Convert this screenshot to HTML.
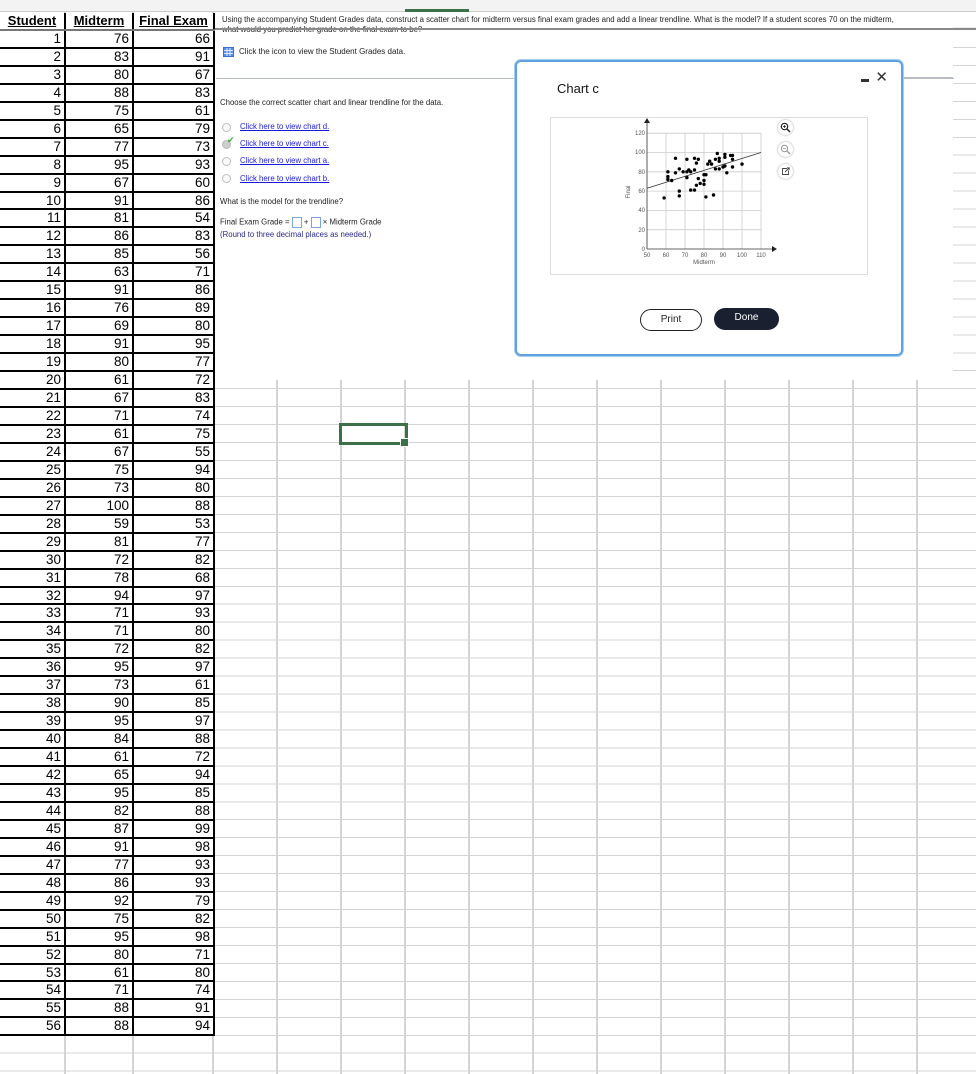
<!DOCTYPE html>
<html><head><meta charset="utf-8"><style>
*{margin:0;padding:0;box-sizing:border-box}
body{width:976px;height:1074px;overflow:hidden;background:#fff;position:relative;font-family:"Liberation Sans",Arial,sans-serif}
.grid{position:absolute;left:0;top:13px;width:976px;height:1061px;
background-image:repeating-linear-gradient(to bottom,transparent 0,transparent 16.96px,#d4d4d4 16.96px,#d4d4d4 17.96px);
background-position:0 17px}
.vl{position:absolute;top:0;width:2px;height:1074px;background:#d4d4d4}
.hdr{position:absolute;left:0;top:0;width:976px;height:12px;background:#f3f3f3;border-bottom:1px solid #ccc}
.tbl{position:absolute;left:0;top:13px;width:215px;background:#fff}
.r{display:flex;height:17.96px;border-bottom:2px solid #000;font-size:13.5px;line-height:16px;color:#000}
.r div{border-right:2px solid #000;text-align:right;padding-right:3px}
.c1{width:66px}.c2{width:68px}.c3{width:81px}
.h div{text-align:center;font-weight:bold;text-decoration:underline;padding:0;font-size:13px}
.panel{position:absolute;left:215px;top:12px;width:738px;height:368px;background:#fff;font-size:8px;color:#222}
.panel p{position:absolute;white-space:nowrap}
.lnk{color:#1a1adc;text-decoration:underline}
.rad{position:absolute;width:9px;height:9px;border:1px solid #bbb;border-radius:50%;background:#fafafa}
.dlg{position:absolute;left:515px;top:60px;width:388px;height:296px;border:2px solid #5ea3e0;border-radius:6px;background:#fff;box-shadow:0 0 0 1px #a9cdf0}
.btn{position:absolute;height:22px;border-radius:11px;font-size:10px;text-align:center;line-height:20px}
.ic{position:absolute;width:15px;height:15px;border-radius:50%;background:#fff;box-shadow:0 0 2px #999}
</style></head><body>
<div class="grid"></div>
<div class="vl" style="left:64px"></div><div class="vl" style="left:132px"></div><div class="vl" style="left:212px"></div>
<div class="vl" style="left:276px"></div><div class="vl" style="left:340px"></div><div class="vl" style="left:404px"></div>
<div class="vl" style="left:468px"></div><div class="vl" style="left:532px"></div><div class="vl" style="left:596px"></div>
<div class="vl" style="left:660px"></div><div class="vl" style="left:724px"></div><div class="vl" style="left:788px"></div>
<div class="vl" style="left:852px"></div><div class="vl" style="left:916px"></div>
<div class="hdr"></div>
<div style="position:absolute;left:405px;top:9px;width:64px;height:3px;background:#3b7049"></div>
<div class="tbl">
<div class="r h"><div class="c1">Student</div><div class="c2">Midterm</div><div class="c3">Final Exam</div></div>
<div class="r"><div class="c1">1</div><div class="c2">76</div><div class="c3">66</div></div>
<div class="r"><div class="c1">2</div><div class="c2">83</div><div class="c3">91</div></div>
<div class="r"><div class="c1">3</div><div class="c2">80</div><div class="c3">67</div></div>
<div class="r"><div class="c1">4</div><div class="c2">88</div><div class="c3">83</div></div>
<div class="r"><div class="c1">5</div><div class="c2">75</div><div class="c3">61</div></div>
<div class="r"><div class="c1">6</div><div class="c2">65</div><div class="c3">79</div></div>
<div class="r"><div class="c1">7</div><div class="c2">77</div><div class="c3">73</div></div>
<div class="r"><div class="c1">8</div><div class="c2">95</div><div class="c3">93</div></div>
<div class="r"><div class="c1">9</div><div class="c2">67</div><div class="c3">60</div></div>
<div class="r"><div class="c1">10</div><div class="c2">91</div><div class="c3">86</div></div>
<div class="r"><div class="c1">11</div><div class="c2">81</div><div class="c3">54</div></div>
<div class="r"><div class="c1">12</div><div class="c2">86</div><div class="c3">83</div></div>
<div class="r"><div class="c1">13</div><div class="c2">85</div><div class="c3">56</div></div>
<div class="r"><div class="c1">14</div><div class="c2">63</div><div class="c3">71</div></div>
<div class="r"><div class="c1">15</div><div class="c2">91</div><div class="c3">86</div></div>
<div class="r"><div class="c1">16</div><div class="c2">76</div><div class="c3">89</div></div>
<div class="r"><div class="c1">17</div><div class="c2">69</div><div class="c3">80</div></div>
<div class="r"><div class="c1">18</div><div class="c2">91</div><div class="c3">95</div></div>
<div class="r"><div class="c1">19</div><div class="c2">80</div><div class="c3">77</div></div>
<div class="r"><div class="c1">20</div><div class="c2">61</div><div class="c3">72</div></div>
<div class="r"><div class="c1">21</div><div class="c2">67</div><div class="c3">83</div></div>
<div class="r"><div class="c1">22</div><div class="c2">71</div><div class="c3">74</div></div>
<div class="r"><div class="c1">23</div><div class="c2">61</div><div class="c3">75</div></div>
<div class="r"><div class="c1">24</div><div class="c2">67</div><div class="c3">55</div></div>
<div class="r"><div class="c1">25</div><div class="c2">75</div><div class="c3">94</div></div>
<div class="r"><div class="c1">26</div><div class="c2">73</div><div class="c3">80</div></div>
<div class="r"><div class="c1">27</div><div class="c2">100</div><div class="c3">88</div></div>
<div class="r"><div class="c1">28</div><div class="c2">59</div><div class="c3">53</div></div>
<div class="r"><div class="c1">29</div><div class="c2">81</div><div class="c3">77</div></div>
<div class="r"><div class="c1">30</div><div class="c2">72</div><div class="c3">82</div></div>
<div class="r"><div class="c1">31</div><div class="c2">78</div><div class="c3">68</div></div>
<div class="r"><div class="c1">32</div><div class="c2">94</div><div class="c3">97</div></div>
<div class="r"><div class="c1">33</div><div class="c2">71</div><div class="c3">93</div></div>
<div class="r"><div class="c1">34</div><div class="c2">71</div><div class="c3">80</div></div>
<div class="r"><div class="c1">35</div><div class="c2">72</div><div class="c3">82</div></div>
<div class="r"><div class="c1">36</div><div class="c2">95</div><div class="c3">97</div></div>
<div class="r"><div class="c1">37</div><div class="c2">73</div><div class="c3">61</div></div>
<div class="r"><div class="c1">38</div><div class="c2">90</div><div class="c3">85</div></div>
<div class="r"><div class="c1">39</div><div class="c2">95</div><div class="c3">97</div></div>
<div class="r"><div class="c1">40</div><div class="c2">84</div><div class="c3">88</div></div>
<div class="r"><div class="c1">41</div><div class="c2">61</div><div class="c3">72</div></div>
<div class="r"><div class="c1">42</div><div class="c2">65</div><div class="c3">94</div></div>
<div class="r"><div class="c1">43</div><div class="c2">95</div><div class="c3">85</div></div>
<div class="r"><div class="c1">44</div><div class="c2">82</div><div class="c3">88</div></div>
<div class="r"><div class="c1">45</div><div class="c2">87</div><div class="c3">99</div></div>
<div class="r"><div class="c1">46</div><div class="c2">91</div><div class="c3">98</div></div>
<div class="r"><div class="c1">47</div><div class="c2">77</div><div class="c3">93</div></div>
<div class="r"><div class="c1">48</div><div class="c2">86</div><div class="c3">93</div></div>
<div class="r"><div class="c1">49</div><div class="c2">92</div><div class="c3">79</div></div>
<div class="r"><div class="c1">50</div><div class="c2">75</div><div class="c3">82</div></div>
<div class="r"><div class="c1">51</div><div class="c2">95</div><div class="c3">98</div></div>
<div class="r"><div class="c1">52</div><div class="c2">80</div><div class="c3">71</div></div>
<div class="r"><div class="c1">53</div><div class="c2">61</div><div class="c3">80</div></div>
<div class="r"><div class="c1">54</div><div class="c2">71</div><div class="c3">74</div></div>
<div class="r"><div class="c1">55</div><div class="c2">88</div><div class="c3">91</div></div>
<div class="r"><div class="c1">56</div><div class="c2">88</div><div class="c3">94</div></div>
</div>
<div style="position:absolute;left:0;top:29px;width:215px;height:2px;background:#777"></div>

<div class="panel">
<p style="left:7px;top:3px;font-size:7.8px">Using the accompanying Student Grades data, construct a scatter chart for midterm versus final exam grades and add a linear trendline. What is the model? If a student scores 70 on the midterm,</p>
<p style="left:7px;top:13px;font-size:7.8px">what would you predict her grade on the final exam to be?</p>
<div style="position:absolute;left:0;top:16px;width:761px;height:2px;background:#8a8a8a"></div>
<svg style="position:absolute;left:8px;top:35px" width="11" height="10"><rect x=".5" y=".5" width="10" height="9" fill="#5b8ee8" stroke="#3a6fd0"/><path d="M1 3.5H10M1 6.5H10M4 1V9M7 1V9" stroke="#fff" stroke-width=".8"/></svg>
<p style="left:24px;top:35px">Click the icon to view the Student Grades data.</p>
<div style="position:absolute;left:1px;top:66px;width:738px;height:1px;background:#b7bdc8"></div>
<p style="left:5px;top:86px;font-size:7.8px">Choose the correct scatter chart and linear trendline for the data.</p>
<div class="rad" style="left:7px;top:111px"></div><p class="lnk" style="left:25px;top:110px;font-size:7.8px">Click here to view chart d.</p>
<div class="rad" style="left:7px;top:128px;background:#ccc"></div><span style="position:absolute;left:12px;top:123px;color:#3a3;font-size:9px">✔</span><p class="lnk" style="left:25px;top:127px;font-size:7.8px">Click here to view chart c.</p>
<div class="rad" style="left:7px;top:145px"></div><p class="lnk" style="left:25px;top:144px;font-size:7.8px">Click here to view chart a.</p>
<div class="rad" style="left:7px;top:162px"></div><p class="lnk" style="left:25px;top:162px;font-size:7.8px">Click here to view chart b.</p>
<p style="left:5px;top:185px;font-size:7.8px">What is the model for the trendline?</p>
<p style="left:5px;top:205px;font-size:7.8px">Final Exam Grade = <span style="display:inline-block;width:10px;height:11px;border:1px solid #7aa7e0;vertical-align:middle"></span> + <span style="display:inline-block;width:10px;height:11px;border:1px solid #7aa7e0;vertical-align:middle"></span> × Midterm Grade</p>
<p style="left:5px;top:218px;font-size:7.8px;color:#2a2a8a">(Round to three decimal places as needed.)</p>
</div>

<div class="dlg">
<div style="position:absolute;left:40px;top:19px;font-size:13px;color:#111">Chart c</div>
<div style="position:absolute;width:8px;height:3px;background:#333;top:17px;right:32px"></div>
<div style="position:absolute;right:13px;top:6px;font-size:15px;color:#333">✕</div>
<div style="position:absolute;left:33px;top:55px;width:318px;height:158px;border:1px solid #ddd"></div>
<svg style="position:absolute;left:83px;top:55px" width="200" height="150" font-family="Liberation Sans,sans-serif" font-size="6" fill="#555">
<g stroke="#ccc" stroke-width=".8">
<path d="M66 16V132M85 16V132M104 16V132M123 16V132M142 16V132M161 16V132"/>
<path d="M47 16.2H161M47 35.5H161M47 54.8H161M47 74.1H161M47 93.4H161M47 112.7H161"/>
</g>
<path d="M47 132V6M47 132H172" stroke="#333" stroke-width=".8"/>
<path d="M44 6L47 1L50 6Z M172 129L177 132L172 135Z" fill="#222"/>
<path d="M47 71.2L161 35.5" stroke="#333" stroke-width=".8"/>
<g text-anchor="end"><text x="45" y="18">120</text><text x="45" y="37">100</text><text x="45" y="57">80</text><text x="45" y="76">60</text><text x="45" y="95">40</text><text x="45" y="115">20</text><text x="45" y="134">0</text></g>
<g text-anchor="middle"><text x="47" y="140">50</text><text x="66" y="140">60</text><text x="85" y="140">70</text><text x="104" y="140">80</text><text x="123" y="140">90</text><text x="142" y="140">100</text><text x="161" y="140">110</text><text x="104" y="147">Midterm</text></g>
<text transform="translate(30 75) rotate(-90)" text-anchor="middle">Final</text>
<g fill="#000">
<circle cx="96.4" cy="68.3" r="1.7"/><circle cx="109.7" cy="44.2" r="1.7"/><circle cx="104" cy="67.3" r="1.7"/><circle cx="119.2" cy="51.9" r="1.7"/><circle cx="94.5" cy="73.1" r="1.7"/><circle cx="75.5" cy="55.8" r="1.7"/><circle cx="98.3" cy="61.6" r="1.7"/><circle cx="132.5" cy="42.3" r="1.7"/><circle cx="79.3" cy="74.1" r="1.7"/><circle cx="124.9" cy="49" r="1.7"/><circle cx="105.9" cy="79.9" r="1.7"/><circle cx="115.4" cy="51.9" r="1.7"/><circle cx="113.5" cy="78" r="1.7"/><circle cx="71.7" cy="63.5" r="1.7"/><circle cx="96.4" cy="46.1" r="1.7"/><circle cx="83.1" cy="54.8" r="1.7"/><circle cx="124.9" cy="40.3" r="1.7"/><circle cx="104" cy="57.7" r="1.7"/><circle cx="67.9" cy="62.5" r="1.7"/><circle cx="79.3" cy="51.9" r="1.7"/><circle cx="86.9" cy="60.6" r="1.7"/><circle cx="67.9" cy="59.6" r="1.7"/><circle cx="79.3" cy="78.9" r="1.7"/><circle cx="94.5" cy="41.3" r="1.7"/><circle cx="90.7" cy="54.8" r="1.7"/><circle cx="142" cy="47.1" r="1.7"/><circle cx="64.1" cy="80.9" r="1.7"/><circle cx="105.9" cy="57.7" r="1.7"/><circle cx="88.8" cy="52.9" r="1.7"/><circle cx="100.2" cy="66.4" r="1.7"/><circle cx="130.6" cy="38.4" r="1.7"/><circle cx="86.9" cy="42.3" r="1.7"/><circle cx="86.9" cy="54.8" r="1.7"/><circle cx="132.5" cy="38.4" r="1.7"/><circle cx="90.7" cy="73.1" r="1.7"/><circle cx="123" cy="50" r="1.7"/><circle cx="111.6" cy="47.1" r="1.7"/><circle cx="75.5" cy="41.3" r="1.7"/><circle cx="132.5" cy="50" r="1.7"/><circle cx="107.8" cy="47.1" r="1.7"/><circle cx="117.3" cy="36.5" r="1.7"/><circle cx="124.9" cy="37.4" r="1.7"/><circle cx="98.3" cy="42.3" r="1.7"/><circle cx="115.4" cy="42.3" r="1.7"/><circle cx="126.8" cy="55.8" r="1.7"/><circle cx="94.5" cy="52.9" r="1.7"/><circle cx="104" cy="63.5" r="1.7"/><circle cx="67.9" cy="54.8" r="1.7"/><circle cx="119.2" cy="44.2" r="1.7"/><circle cx="119.2" cy="41.3" r="1.7"/>
</g>
</svg>
<div class="ic" style="left:261px;top:58px"><svg width="15" height="15"><circle cx="6.5" cy="6.5" r="3.2" fill="none" stroke="#222" stroke-width="1.2"/><path d="M9 9L12 12" stroke="#222" stroke-width="1.5"/><path d="M5 6.5H8M6.5 5V8" stroke="#222" stroke-width=".8"/></svg></div>
<div class="ic" style="left:261px;top:80px"><svg width="15" height="15"><circle cx="6.5" cy="6.5" r="3.2" fill="none" stroke="#999" stroke-width="1"/><path d="M9 9L12 12" stroke="#999" stroke-width="1.3"/><path d="M5 6.5H8" stroke="#999" stroke-width=".8"/></svg></div>
<div class="ic" style="left:261px;top:102px"><svg width="15" height="15"><path d="M9 4.5H4.5V10.5H10.5V6.5" fill="none" stroke="#444" stroke-width=".9"/><path d="M7 8L11 4M9 3.8H11.2V6" fill="none" stroke="#444" stroke-width=".9"/></svg></div>
<div class="btn" style="left:123px;top:247px;width:62px;border:1.5px solid #222;color:#222">Print</div>
<div class="btn" style="left:197px;top:246px;width:65px;background:#1b2030;color:#fff">Done</div>
</div>
<div style="position:absolute;left:903px;top:77px;width:50px;height:1px;background:#b7bdc8"></div>

<div style="position:absolute;left:339px;top:423px;width:69px;height:22px;border:3px solid #3b7049"></div>
<div style="position:absolute;left:400px;top:438px;width:9px;height:9px;background:#3b7049;border:1px solid #fff"></div>
</body></html>
